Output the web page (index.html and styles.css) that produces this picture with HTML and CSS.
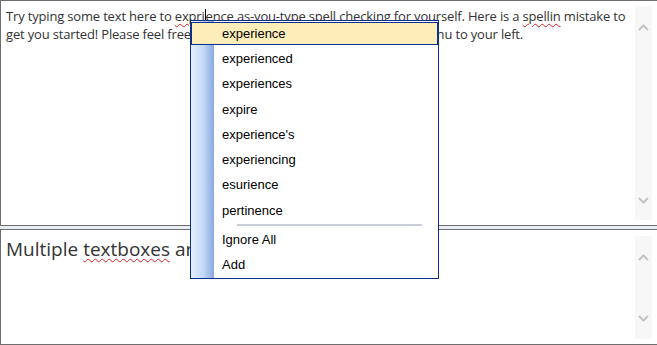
FILE: index.html
```html
<!DOCTYPE html>
<html>
<head>
<meta charset="utf-8">
<link rel="stylesheet" href="styles.css">
</head>
<body>
<div class="page">
  <div class="box box-top">
    <div class="text text-small">Try typing some text here to <span class="err">expri<span class="caret"></span>ence</span> as-you-type spell checking for yourself. Here is a <span class="err">spellin</span> mistake to get you started! Please feel free to right-click words to see the context menu to your left.</div>
    <div class="scroll">
      <svg class="arrow" width="11" height="7" viewBox="0 0 11 7"><path d="M1 6 L5.5 1.5 L10 6" fill="none" stroke="#c4c4c4" stroke-width="2"/></svg>
      <svg class="arrow" width="11" height="7" viewBox="0 0 11 7"><path d="M1 1 L5.5 5.5 L10 1" fill="none" stroke="#c4c4c4" stroke-width="2"/></svg>
    </div>
  </div>
  <div class="splitter"></div>
  <div class="box box-bottom">
    <div class="text text-large">Multiple <span class="err">textboxes</span> are supported.</div>
    <div class="scroll scroll-b">
      <svg class="arrow" width="11" height="7" viewBox="0 0 11 7"><path d="M1 6 L5.5 1.5 L10 6" fill="none" stroke="#c4c4c4" stroke-width="2"/></svg>
      <svg class="arrow" width="11" height="7" viewBox="0 0 11 7"><path d="M1 1 L5.5 5.5 L10 1" fill="none" stroke="#c4c4c4" stroke-width="2"/></svg>
    </div>
  </div>
  <div class="menu">
    <div class="gutter"></div>
    <div class="item active">experience</div>
    <div class="item">experienced</div>
    <div class="item">experiences</div>
    <div class="item">expire</div>
    <div class="item">experience's</div>
    <div class="item">experiencing</div>
    <div class="item">esurience</div>
    <div class="item">pertinence</div>
    <div class="sep"></div>
    <div class="item">Ignore All</div>
    <div class="item">Add</div>
  </div>
</div>
</body>
</html>
```
FILE: styles.css
```css
html, body {
  margin: 0;
  padding: 0;
  background: #ffffff;
  overflow: hidden;
}
.page {
  position: relative;
  width: 658px;
  height: 345px;
}
.box {
  box-sizing: border-box;
  width: 658px;
  border: 1px solid #6e6e6e;
  display: flex;
  background: #fff;
}
.box-top {
  height: 226px;
  padding: 5px 5px 5px 5px;
}
.splitter {
  height: 3px;
  background: #e8edf6;
}
.box-bottom {
  height: 116px;
  padding: 6px 5px 5px 5px;
}
.text {
  flex: 1;
  color: #333333;
  font-family: "Open Sans", "Noto Sans", sans-serif;
  padding-right: 6px;
}
.text-small {
  font-size: 13px;
  line-height: 18px;
  letter-spacing: -0.17px;
  padding-top: 1px;
}
.text-large {
  font-size: 19px;
  line-height: 24px;
  letter-spacing: 0;
  padding-top: 1px;
}
.err {
  text-decoration: underline wavy #e02020;
  text-decoration-thickness: 1px;
  text-underline-offset: 2px;
}
.caret {
  display: inline-block;
  width: 0;
  height: 16px;
  border-left: 1px solid #000;
  vertical-align: -4px;
}
.scroll {
  width: 17px;
  background: #f7f7f7;
  display: flex;
  flex-direction: column;
  justify-content: space-between;
  align-items: center;
  padding: 18px 0 16px 0;
}
.scroll-b {
  padding: 18px 0 17px 0;
}
.arrow {
  display: block;
}
.menu {
  position: absolute;
  left: 190px;
  top: 20px;
  width: 249px;
  box-sizing: border-box;
  border: 1px solid #0a2f8f;
  background: #ffffff;
  font-family: "Liberation Sans", Arial, sans-serif;
  font-size: 13px;
  color: #000;
  padding-bottom: 1px;
}
.gutter {
  position: absolute;
  left: 0;
  top: 0;
  bottom: 0;
  width: 23px;
  background: linear-gradient(to right, #e6f0fd, #c3d7f5 55%, #88a8e0);
}
.item {
  position: relative;
  height: 25.25px;
  line-height: 25.25px;
  padding-left: 31px;
}
.item.active {
  height: 21px;
  line-height: 21px;
  margin: 1px 0 1px 0;
  border: 1px solid #0a2f8f;
  background: #fdeeb9;
  padding-left: 30px;
}
.sep {
  position: relative;
  height: 4px;
  display: flex;
  align-items: center;
  padding-left: 46px;
  padding-right: 16px;
}
.sep::after {
  content: "";
  flex: 1;
  height: 2px;
  background: #c9ced8;
}
```
